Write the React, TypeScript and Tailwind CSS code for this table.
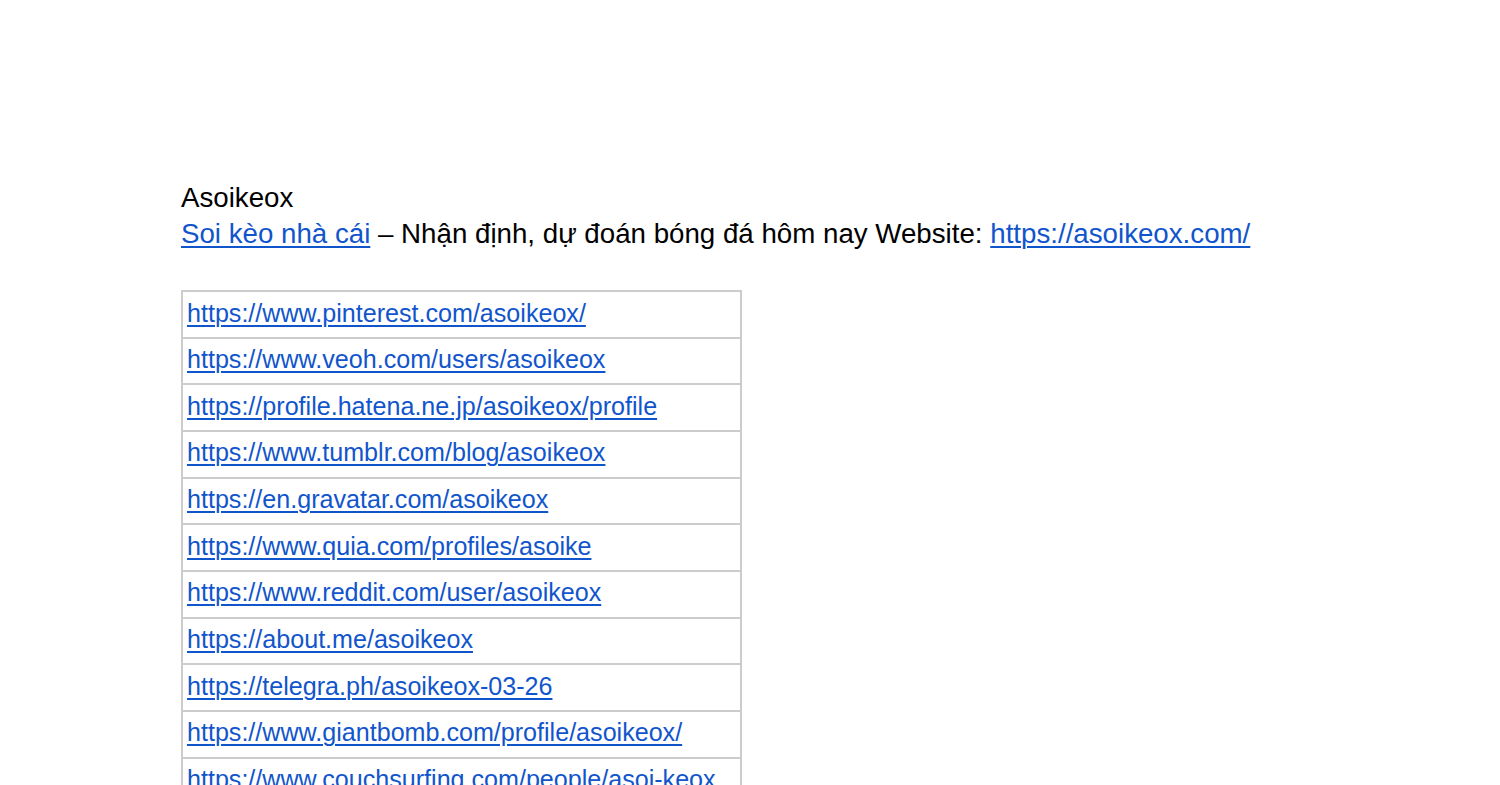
const links = [
  "https://www.pinterest.com/asoikeox/",
  "https://www.veoh.com/users/asoikeox",
  "https://profile.hatena.ne.jp/asoikeox/profile",
  "https://www.tumblr.com/blog/asoikeox",
  "https://en.gravatar.com/asoikeox",
  "https://www.quia.com/profiles/asoike",
  "https://www.reddit.com/user/asoikeox",
  "https://about.me/asoikeox",
  "https://telegra.ph/asoikeox-03-26",
  "https://www.giantbomb.com/profile/asoikeox/",
  "https://www.couchsurfing.com/people/asoi-keox",
];

const linkCls =
  "text-[#1155cc] underline decoration-2 underline-offset-[3px] decoration-[#1155cc]";

export default function App() {
  return (
    <main
      className="min-h-screen bg-white pt-[180px] pl-[181px] text-black"
      style={{ fontFamily: '"Liberation Sans", Arial, sans-serif' }}
    >
      <div className="text-[27.7px] leading-[36px]">
        <p>Asoikeox</p>
        <p>
          <a href="#" className={linkCls}>
            Soi kèo nhà cái
          </a>{" "}
          – Nhận định, dự đoán bóng đá hôm nay Website:{" "}
          <a href="#" className={linkCls}>
            https://asoikeox.com/
          </a>
        </p>
      </div>

      <div className="mt-[38px] w-[561px] border-x-2 border-t-2 border-[#cccccc]">
        {links.map((url) => (
          <div
            key={url}
            className="h-[46.67px] border-b-2 border-[#cccccc] pl-[4px] pt-[6.5px] text-[25.1px] leading-[28.75px]"
          >
            <a href="#" className={linkCls}>
              {url}
            </a>
          </div>
        ))}
      </div>
    </main>
  );
}
